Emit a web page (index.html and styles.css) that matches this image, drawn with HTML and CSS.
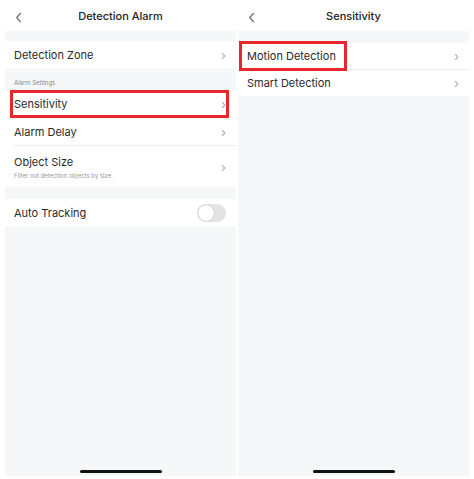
FILE: index.html
```html
<!DOCTYPE html>
<html>
<head>
    <title>Detection Alarm</title>
    <link rel="stylesheet" href="styles.css">
</head>
<body>
    <div class="screens">
        <div class="phone">
            <div class="nav">
                <span class="back">&#8249;</span>
                <span class="title">Detection Alarm</span>
            </div>
            <div class="group first">
                <div class="row"><span>Detection Zone</span><span class="chev">&#8250;</span></div>
            </div>
            <div class="section-label">Alarm Settings</div>
            <div class="group">
                <div class="row marked"><span>Sensitivity</span><span class="chev">&#8250;</span></div>
                <div class="row"><span>Alarm Delay</span><span class="chev">&#8250;</span></div>
                <div class="row tall">
                    <div>
                        <div>Object Size</div>
                        <div class="sub">Filter out detection objects by size.</div>
                    </div>
                    <span class="chev">&#8250;</span>
                </div>
            </div>
            <div class="group spaced">
                <div class="row"><span>Auto Tracking</span><span class="toggle"></span></div>
            </div>
            <div class="home-bar"></div>
        </div>
        <div class="phone">
            <div class="nav">
                <span class="back">&#8249;</span>
                <span class="title">Sensitivity</span>
            </div>
            <div class="group first compact">
                <div class="row"><span class="boxed">Motion Detection</span><span class="chev">&#8250;</span></div>
                <div class="row"><span>Smart Detection</span><span class="chev">&#8250;</span></div>
            </div>
            <div class="home-bar"></div>
        </div>
    </div>
</body>
</html>
```
FILE: styles.css
```css
body { margin: 0; background: #fff; font-family: Inter, "Noto Sans", sans-serif; color: #222; }
.screens { display: flex; gap: 2px; padding: 0 5px; height: 476px; }
.phone { flex: 1; background: #f6f7f9; display: flex; flex-direction: column; position: relative; }
.nav { background: #fff; height: 31px; display: flex; align-items: center; justify-content: center; position: relative; }
.nav .title { font-size: 11px; font-weight: 500; color: #222; }
.back { position: absolute; left: 10px; top: 5px; font-size: 20px; font-weight: 300; color: #666; }
.group { background: #fff; }
.group.first { margin-top: 10px; }
.group.spaced { margin-top: 12px; }
.group.compact { margin-top: 12px; }
.group.compact .row { height: 26px; }
.section-label { font-size: 6px; line-height: 8px; color: #888; padding: 11px 0 3px 9px; }
.row { display: flex; align-items: center; justify-content: space-between; height: 27px; margin-left: 9px; padding-right: 10px; font-size: 11px; font-weight: 400; color: #2a2a2a; border-bottom: 1px solid #ececec; }
.row:last-child { border-bottom: none; }
.row.tall { height: 41px; }
.sub { font-size: 6px; color: #999; margin-top: 3px; }
.chev { font-size: 13px; color: #aaa; }
.marked { margin-left: 5px; padding-left: 4px; margin-right: 7px; padding-right: 3px; outline: 3px solid #e8262d; outline-offset: -3px; }
.boxed { outline: 3px solid #e8262d; outline-offset: 5px; padding-right: 3px; }
.toggle { width: 29px; height: 18px; border-radius: 10px; background: #e3e3e6; position: relative; }
.toggle::after { content: ""; position: absolute; left: 1px; top: 1px; width: 16px; height: 16px; border-radius: 50%; background: #fff; box-shadow: 0 0 1px rgba(0,0,0,0.4); }
.home-bar { position: absolute; bottom: 3px; left: 50%; transform: translateX(-50%); width: 82px; height: 3px; border-radius: 2px; background: #111; }
```
